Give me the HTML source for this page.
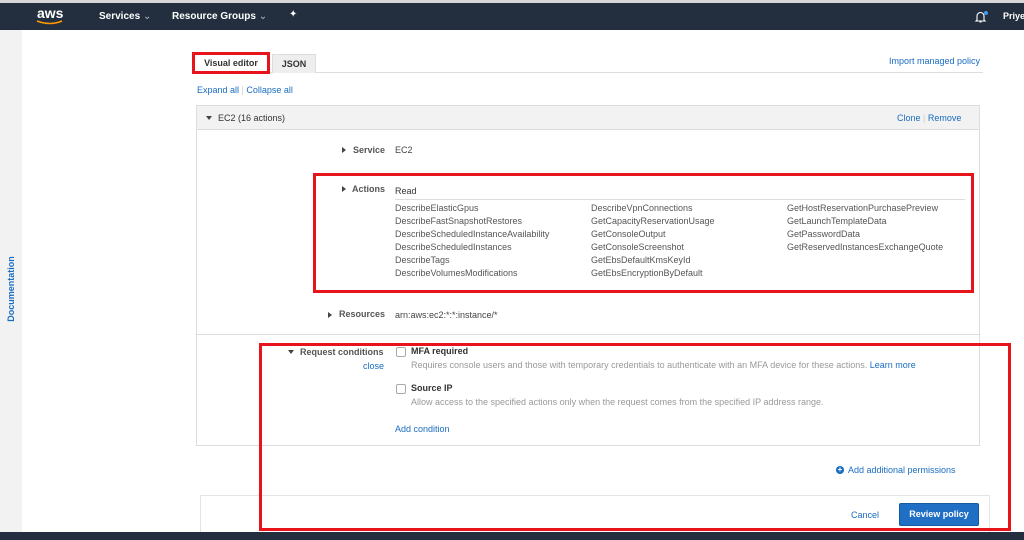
<!DOCTYPE html>
<html><head><meta charset="utf-8"><style>
*{margin:0;padding:0;box-sizing:border-box}
body{width:1024px;height:540px;position:relative;overflow:hidden;background:#fff;font-family:"Liberation Sans",Arial,sans-serif;font-size:9px;color:#444}
.a{position:absolute;white-space:nowrap}
.b{color:#1a6cc0}
.lbl{color:#555;font-weight:bold;font-size:9px}
.tri{position:absolute;width:0;height:0;border-top:3px solid transparent;border-bottom:3px solid transparent;border-left:4px solid #444}
.trd{position:absolute;width:0;height:0;border-left:3px solid transparent;border-right:3px solid transparent;border-top:4px solid #444}
.red{position:absolute;border:3px solid #e8141c;z-index:5}
.cb{position:absolute;width:10px;height:10px;border:1px solid #aaa;border-radius:2px;background:#fff}
.col div{height:13px;line-height:13px}
</style></head><body>
<div class="a" style="left:0;top:0;width:1024px;height:3px;background:#d8d8d8"></div>
<div class="a" style="left:0;top:3px;width:1024px;height:27px;background:#232f3e"></div>
<div class="a" style="left:37px;top:5px;color:#fff;font-size:14px;font-weight:bold;letter-spacing:0">aws</div>
<svg class="a" style="left:36px;top:20px" width="28" height="6"><path d="M1 1 Q14 6 26 1" stroke="#f90" stroke-width="1.6" fill="none"/></svg>
<div class="a" style="left:99px;top:11px;color:#fff;font-weight:bold;font-size:10px">Services <span style="font-weight:normal;color:#bbb">⌄</span></div>
<div class="a" style="left:172px;top:11px;color:#fff;font-weight:bold;font-size:10px">Resource Groups <span style="font-weight:normal;color:#bbb">⌄</span></div>
<div class="a" style="left:289px;top:9px;color:#fff;font-size:10px">✦</div>
<svg class="a" style="left:974px;top:10px" width="14" height="14"><path d="M3 10 V6 A3.5 3.5 0 0 1 10 6 V10 L11 11 H2 Z M5.5 12 H7.5" stroke="#fff" stroke-width="1.1" fill="none"/><circle cx="12" cy="3" r="2" fill="#3b9cf0"/></svg>
<div class="a" style="left:1003px;top:11px;color:#fff;font-weight:bold;font-size:9px">Priye</div>

<div class="a" style="left:0;top:30px;width:22px;height:502px;background:#f2f2f2"></div>
<div class="a b" style="left:-23px;top:284px;transform:rotate(-90deg);font-size:9px;font-weight:bold;width:68px;text-align:center">Documentation</div>

<div class="a" style="left:193px;top:72px;width:790px;height:1px;background:#ddd"></div>
<div class="a" style="left:272px;top:54px;width:44px;height:19px;background:#eee;border:1px solid #ddd;border-bottom:none;font-weight:bold;font-size:9px;text-align:center;line-height:18px;color:#333">JSON</div>
<div class="a" style="left:192px;top:52px;width:78px;height:22px;border:3px solid #e8141c;background:#fff;font-weight:bold;font-size:9px;text-align:center;line-height:16px;color:#333">Visual editor</div>
<div class="a b" style="left:889px;top:56px;font-size:9px">Import managed policy</div>
<div class="a b" style="left:197px;top:85px">Expand all <span style="color:#ccc">|</span> Collapse all</div>

<div class="a" style="left:196px;top:105px;width:784px;height:341px;border:1px solid #ddd"></div>
<div class="a" style="left:197px;top:106px;width:782px;height:24px;background:#f2f2f2;border-bottom:1px solid #ddd"></div>
<div class="trd" style="left:206px;top:116px"></div>
<div class="a" style="left:218px;top:113px;color:#333">EC2 (16 actions)</div>
<div class="a b" style="left:897px;top:113px">Clone <span style="color:#ccc">|</span> Remove</div>

<div class="tri" style="left:342px;top:147px"></div>
<div class="a lbl" style="left:353px;top:145px">Service</div>
<div class="a" style="left:395px;top:145px">EC2</div>

<div class="red" style="left:313px;top:173px;width:661px;height:120px"></div>
<div class="tri" style="left:342px;top:186px"></div>
<div class="a lbl" style="left:352px;top:184px">Actions</div>
<div class="a" style="left:395px;top:186px;color:#333">Read</div>
<div class="a" style="left:395px;top:199px;width:570px;height:1px;background:#ddd"></div>
<div class="a col" style="left:395px;top:202px;color:#555"><div>DescribeElasticGpus</div><div>DescribeFastSnapshotRestores</div><div>DescribeScheduledInstanceAvailability</div><div>DescribeScheduledInstances</div><div>DescribeTags</div><div>DescribeVolumesModifications</div></div>
<div class="a col" style="left:591px;top:202px;color:#555"><div>DescribeVpnConnections</div><div>GetCapacityReservationUsage</div><div>GetConsoleOutput</div><div>GetConsoleScreenshot</div><div>GetEbsDefaultKmsKeyId</div><div>GetEbsEncryptionByDefault</div></div>
<div class="a col" style="left:787px;top:202px;color:#555"><div>GetHostReservationPurchasePreview</div><div>GetLaunchTemplateData</div><div>GetPasswordData</div><div>GetReservedInstancesExchangeQuote</div></div>

<div class="tri" style="left:328px;top:312px"></div>
<div class="a lbl" style="left:339px;top:309px">Resources</div>
<div class="a" style="left:395px;top:310px">arn:aws:ec2:*:*:instance/*</div>
<div class="a" style="left:197px;top:334px;width:782px;height:1px;background:#ddd"></div>

<div class="trd" style="left:288px;top:350px"></div>
<div class="a lbl" style="left:300px;top:347px">Request conditions</div>
<div class="a b" style="left:363px;top:361px">close</div>
<div class="cb" style="left:396px;top:347px"></div>
<div class="a" style="left:411px;top:346px;font-weight:bold;color:#333">MFA required</div>
<div class="a" style="left:411px;top:360px;color:#999">Requires console users and those with temporary credentials to authenticate with an MFA device for these actions. <span class="b">Learn more</span></div>
<div class="cb" style="left:396px;top:384px"></div>
<div class="a" style="left:411px;top:383px;font-weight:bold;color:#333">Source IP</div>
<div class="a" style="left:411px;top:397px;color:#999">Allow access to the specified actions only when the request comes from the specified IP address range.</div>
<div class="a b" style="left:395px;top:424px">Add condition</div>

<div class="a" style="left:836px;top:466px;width:8px;height:8px;border-radius:50%;background:#1a6cc0;color:#fff;font-size:8px;line-height:8px;text-align:center;font-weight:bold">+</div>
<div class="a b" style="left:848px;top:465px">Add additional permissions</div>

<div class="a" style="left:200px;top:495px;width:790px;height:40px;border:1px solid #e4e4e4;background:#fff"></div>
<div class="a b" style="left:851px;top:510px">Cancel</div>
<div class="a" style="left:899px;top:503px;width:80px;height:23px;background:#1f6fc5;border:1px solid #155a9e;border-radius:2px;color:#fff;font-weight:bold;text-align:center;line-height:21px">Review policy</div>

<div class="red" style="left:259px;top:343px;width:752px;height:188px"></div>

<div class="a" style="left:0;top:532px;width:1024px;height:8px;background:#232f3e;z-index:6"></div>
</body></html>
